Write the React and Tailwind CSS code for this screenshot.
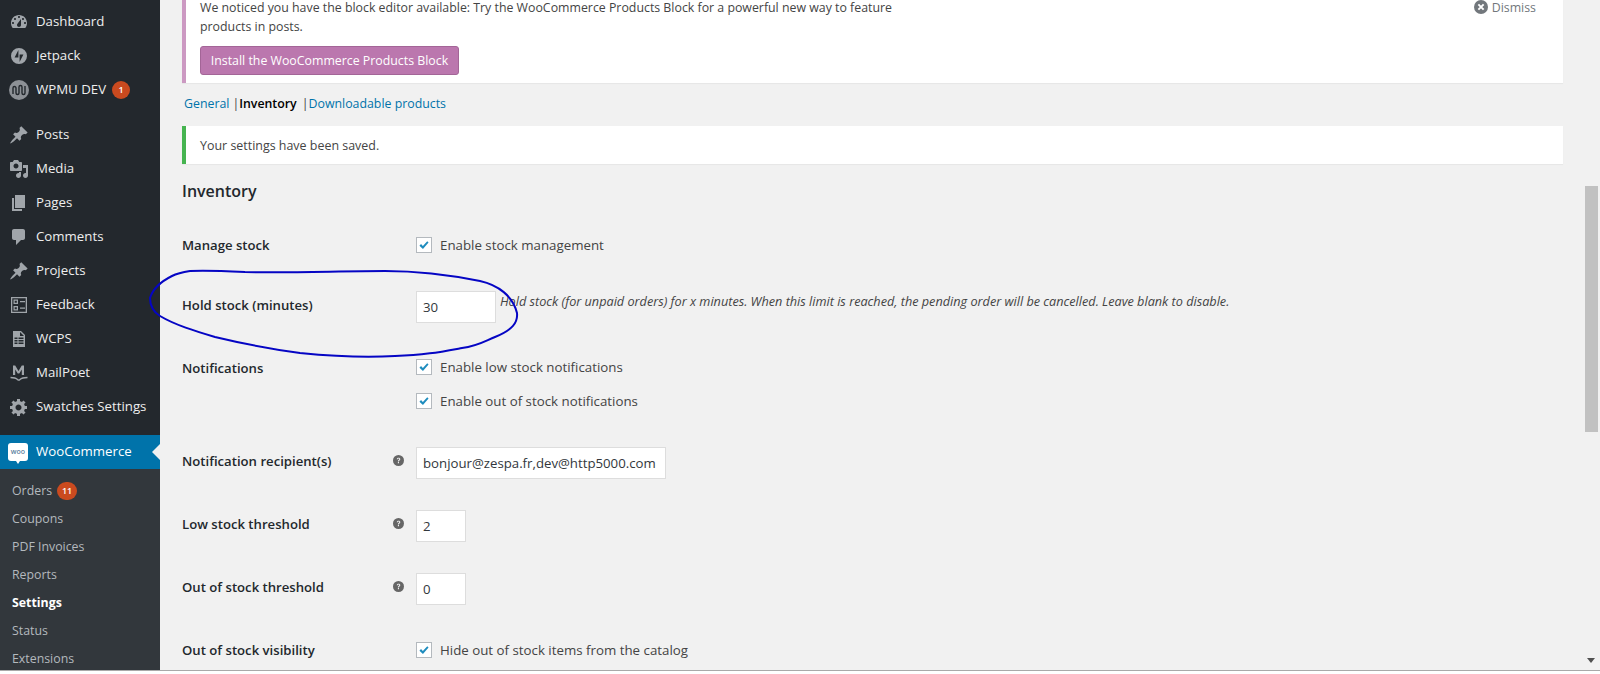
import React from "react";

const P = {
  dash: "M3.76 16h12.48c1.1-1.37 1.76-3.11 1.76-5 0-4.42-3.58-8-8-8s-8 3.58-8 8c0 1.89.66 3.63 1.76 5zM10 4c.55 0 1 .45 1 1s-.45 1-1 1-1-.45-1-1 .45-1 1-1zM6 6c.55 0 1 .45 1 1s-.45 1-1 1-1-.45-1-1 .45-1 1-1zm8 0c.55 0 1 .45 1 1s-.45 1-1 1-1-.45-1-1 .45-1 1-1zm-5.37 5.55L12 7v6c0 1.1-.9 2-2 2s-2-.9-2-2c0-.57.24-1.08.63-1.45zM4 10c.55 0 1 .45 1 1s-.45 1-1 1-1-.45-1-1 .45-1 1-1zm12 0c.55 0 1 .45 1 1s-.45 1-1 1-1-.45-1-1 .45-1 1-1z",
  jet: "M10 2a8 8 0 1 0 0 16 8 8 0 0 0 0-16zM9.4 11.4H5.6L9.4 4v7.4zm1.2 4.6V8.6h3.8L10.6 16z",
  pin: "M10.44 3.02l1.82-1.82 6.36 6.35-1.83 1.82c-1.05-.68-2.48-.57-3.41.36l-.75.75c-.92.93-1.04 2.35-.35 3.41l-1.83 1.82-2.41-2.41-2.8 2.79c-.42.42-3.38 2.71-3.8 2.29s1.86-3.39 2.28-3.81l2.79-2.79L4.1 9.36l1.83-1.82c1.05.69 2.48.57 3.4-.36l.75-.75c.93-.92 1.05-2.35.36-3.41z",
  media: "M13 11V4c0-.55-.45-1-1-1h-1.67L9 1H5L3.67 3H2c-.55 0-1 .45-1 1v7c0 .55.45 1 1 1h10c.55 0 1-.45 1-1zM7 4.5c1.38 0 2.5 1.12 2.5 2.5S8.38 9.5 7 9.5 4.5 8.38 4.5 7 5.62 4.5 7 4.5zM14 6h5v10.5c0 1.38-1.12 2.5-2.5 2.5S14 17.88 14 16.5s1.12-2.5 2.5-2.5c.17 0 .34.02.5.05V9h-3V6zm-4 8.05V13h2v3.5c0 1.38-1.12 2.5-2.5 2.5S7 17.88 7 16.5 8.12 14 9.5 14c.17 0 .34.02.5.05z",
  pages: "M6 15V2h10v13H6zm-1 1h8v2H3V5h2v11z",
  comment: "M5 2h9c1.1 0 2 .9 2 2v7c0 1.1-.9 2-2 2h-2l-5 5v-5H5c-1.1 0-2-.9-2-2V4c0-1.1.9-2 2-2z",
  feedback: "M2 2h16v16H2V2zm1.3 1.3v13.4h13.4V3.3H3.3zM4.5 4.5H9V9H4.5zm1.2 1.2v2.1h2.1V5.7H5.7zM11 6h5v1.3h-5V6zM4.5 11H9v4.5H4.5V11zm1.2 1.2v2.1h2.1v-2.1H5.7zM11 12.5h5v1.3h-5v-1.3z",
  wcps: "M4 2h8l4 4v12H4V2zm7 1v4h4l-4-4zM5.5 8.5V10h3V8.5h-3zm4 0V10h5V8.5h-5zM5.5 11v1.5h3V11h-3zm4 0v1.5h5V11h-5zM5.5 13.5V15h3v-1.5h-3zm4 0V15h5v-1.5h-5z",
  gear: "M18 12h-2.18c-.17.7-.44 1.35-.81 1.93l1.54 1.54-2.1 2.1-1.54-1.54c-.58.36-1.23.63-1.91.79V19H8v-2.18c-.68-.16-1.33-.43-1.91-.79l-1.54 1.54-2.12-2.12 1.54-1.54c-.36-.58-.63-1.23-.79-1.91H1V9.03h2.17c.16-.7.44-1.35.8-1.94L2.43 5.55l2.1-2.1 1.54 1.54c.58-.37 1.24-.64 1.93-.81V2h3v2.18c.68.16 1.33.43 1.91.79l1.54-1.54 2.12 2.12-1.54 1.54c.36.59.64 1.24.8 1.94H18V12zm-8.5 1.5c1.66 0 3-1.34 3-3s-1.34-3-3-3-3 1.34-3 3 1.34 3 3 3z",
};

function Dash({ d }) {
  return (
    <svg viewBox="0 0 20 20" className="w-5 h-5 fill-[#a0a5aa]">
      <path d={d} fillRule="evenodd" />
    </svg>
  );
}

function Wpmu() {
  return (
    <svg viewBox="0 0 20 20" className="w-5 h-5">
      <circle cx="10" cy="10" r="10" fill="#8d9196" />
      <path d="M4 14V8a1.500 1.500 0 0 1 3 0v5a1.500 1.500 0 0 0 3 0V7a1.500 1.500 0 0 1 3 0v6a1.500 1.500 0 0 0 3 0V6" fill="none" stroke="#23282d" strokeWidth="1.400" />
    </svg>
  );
}

function MailPoet() {
  return (
    <svg viewBox="0 0 20 20" className="w-5 h-5">
      <path d="M4 12V2.500h2.200L9.500 8l3.300-5.500H15V12h-2.200V6.500L10.300 10.500H8.700L6.200 6.500V12z" fill="#a0a5aa" />
      <path d="M1.500 14.500c3 0 5.500.5 7 2 .8.8 1.700.8 2.500 0 1.500-1.500 4-2 7.500-2" fill="none" stroke="#a0a5aa" strokeWidth="1.300" />
    </svg>
  );
}

function Badge({ n, wide }) {
  return (
    <span className={`inline-flex items-center justify-center h-[18px] rounded-full bg-[#ca4a1f] text-white text-[9px] font-semibold ${wide ? "w-5" : "w-[18px]"}`}>
      {n}
    </span>
  );
}

function NavRow({ icon, children }) {
  return (
    <div className="flex items-center h-[34px] pb-[1px] pl-[7px] text-[13.250px] text-[#eeeeee]">
      <span className="w-[29px] flex shrink-0 pl-[2px]">{icon}</span>
      {children}
    </div>
  );
}

function Sub({ children, bold }) {
  return (
    <div className={`flex items-center gap-[5px] h-[28px] pl-3 text-[12.350px] ${bold ? "font-bold text-white" : "text-[#b4b9be]"}`}>
      {children}
    </div>
  );
}

function Sidebar() {
  return (
    <aside className="w-[160px] shrink-0 bg-[#23282d] pt-[5px] h-full overflow-hidden">
      <NavRow icon={<Dash d={P.dash} />}>Dashboard</NavRow>
      <NavRow icon={<Dash d={P.jet} />}>Jetpack</NavRow>
      <NavRow icon={<Wpmu />}>
        <span className="mr-[6px]">WPMU DEV</span>
        <Badge n="1" />
      </NavRow>
      <div className="h-[11px]" />
      <NavRow icon={<Dash d={P.pin} />}>Posts</NavRow>
      <NavRow icon={<Dash d={P.media} />}>Media</NavRow>
      <NavRow icon={<Dash d={P.pages} />}>Pages</NavRow>
      <NavRow icon={<Dash d={P.comment} />}>Comments</NavRow>
      <NavRow icon={<Dash d={P.pin} />}>Projects</NavRow>
      <NavRow icon={<Dash d={P.feedback} />}>Feedback</NavRow>
      <NavRow icon={<Dash d={P.wcps} />}>WCPS</NavRow>
      <NavRow icon={<MailPoet />}>MailPoet</NavRow>
      <NavRow icon={<Dash d={P.gear} />}>Swatches Settings</NavRow>
      <div className="h-[11px]" />
      <div className="relative flex items-center h-[34px] pb-[1px] pl-[8px] bg-[#0073aa] text-[13.250px] text-white">
        <span className="relative w-5 h-[18px] mr-[8px] rounded-[3px] bg-white flex items-center justify-center text-[7px] font-semibold text-[#5b7fa0] leading-none">
          woo
          <span className="absolute left-[8px] -bottom-[3px] border-t-[3px] border-x-[2px] border-t-white border-x-transparent" />
        </span>
        WooCommerce
        <span className="absolute right-0 top-[9px] border-y-[8px] border-r-[8px] border-y-transparent border-r-[#f1f1f1]" />
      </div>
      <div className="bg-[#32373c] pt-[8px] h-[220px]">
        <Sub>
          Orders <Badge n="11" wide />
        </Sub>
        <Sub>Coupons</Sub>
        <Sub>PDF Invoices</Sub>
        <Sub>Reports</Sub>
        <Sub bold>Settings</Sub>
        <Sub>Status</Sub>
        <Sub>Extensions</Sub>
      </div>
    </aside>
  );
}

function Check({ children }) {
  return (
    <div className="flex items-center gap-2 h-[34px] text-[13.300px] text-[#444]">
      <span className="w-4 h-4 bg-white border border-[#b4b9be] flex items-center justify-center shrink-0">
        <svg viewBox="0 0 16 16" className="w-[15px] h-[15px]">
          <path d="M2.8 8.2l1.8-1.8 2.1 2.2 5-5.5 1.5 1.4-6.400 7.600z" fill="#1e8cbe" />
        </svg>
      </span>
      <span className="pt-px">{children}</span>
    </div>
  );
}

function Help() {
  return (
    <svg viewBox="0 0 16 16" className="w-[11px] h-[11px]">
      <circle cx="8" cy="8" r="8" fill="#666" />
      <path d="M5.5 6.2c0-1.500 1.100-2.300 2.600-2.300s2.500.8 2.500 2.100c0 1.800-2 1.700-2 3.300H7.100c0-2.300 1.900-2.300 1.900-3.300 0-.5-.4-.8-.9-.8-.6 0-1 .4-1 1H5.500zM7.100 10.300h1.600V12H7.100z" fill="#f1f1f1" />
    </svg>
  );
}

function Field({ w, value }) {
  return (
    <div className={`${w} h-[32px] bg-white border border-[#dddddd] pl-[6px] flex items-center pt-[2px] text-[13.230px] text-[#32373c]`}>
      {value}
    </div>
  );
}

function Row({ label, help, top, children, labelTop }) {
  return (
    <div className={`flex ${top}`}>
      <div className={`w-[211px] shrink-0 text-[13.150px] font-semibold text-[#23282d] leading-[18px] ${labelTop}`}>{label}</div>
      <div className="w-[23px] shrink-0 pt-[8px]">{help && <Help />}</div>
      <div className="flex items-start">{children}</div>
    </div>
  );
}

function Content() {
  return (
    <main className="flex-1 min-w-0 pl-[22px] h-full overflow-hidden">
      <div className="w-[1381px] h-[83px] bg-white border-l-4 border-[#cc99c2] shadow-[0_1px_1px_rgba(0,0,0,0.04)] pl-[14px] pr-[27px] flex justify-between text-[12.350px] text-[#444] leading-[19px]">
        <div className="w-[730px] -mt-[2px]">
          <p>We noticed you have the block editor available: Try the WooCommerce Products Block for a powerful new way to feature products in posts.</p>
          <div className="mt-[10px] w-[259px] h-[29px] bg-[#bb77ae] border border-[#a36597] rounded-[3px] text-white flex items-center justify-center">
            Install the WooCommerce Products Block
          </div>
        </div>
        <div className="flex items-start gap-[4px] text-[#72777c] -mt-[2px]">
          <svg viewBox="0 0 16 16" className="w-[14px] h-[14px] mt-[2px]">
            <circle cx="8" cy="8" r="8" fill="#72777c" />
            <path d="M5 5l6 6M11 5l-6 6" stroke="#fff" strokeWidth="2.200" />
          </svg>
          Dismiss
        </div>
      </div>

      <div className="flex items-center h-[19px] mt-[12px] pl-[2px] text-[12.350px] text-[#444]">
        <span className="text-[#0073aa]">General</span>
        <span className="ml-[3px]">|</span>
        <span className="font-semibold text-[#000]">Inventory</span>
        <span className="ml-[5px]">|</span>
        <span className="text-[#0073aa]">Downloadable products</span>
      </div>

      <div className="w-[1381px] h-[38px] mt-[12px] bg-white border-l-4 border-[#46b450] shadow-[0_1px_1px_rgba(0,0,0,0.04)] pl-[14px] pt-[2px] flex items-center text-[12.450px] font-medium text-[#444]">
        Your settings have been saved.
      </div>

      <h2 className="mt-[15px] text-[16px] leading-[24px] font-semibold text-[#23282d]">Inventory</h2>

      <Row label="Manage stock" top="mt-[25px]" labelTop="pt-[8px]">
        <Check>Enable stock management</Check>
      </Row>

      <Row label="Hold stock (minutes)" top="mt-[29px]" labelTop="pt-[5px]">
        <Field w="w-[80px]" value="30" />
        <span className="ml-1 mt-[1px] text-[12.680px] italic text-[#444] leading-[19px]">
          Hold stock (for unpaid orders) for x minutes. When this limit is reached, the pending order will be cancelled. Leave blank to disable.
        </span>
      </Row>

      <Row label="Notifications" top="mt-[29px]" labelTop="pt-[7px]">
        <div className="-mt-[2px]">
          <Check>Enable low stock notifications</Check>
          <Check>Enable out of stock notifications</Check>
        </div>
      </Row>

      <Row label="Notification recipient(s)" help top="mt-[29px]" labelTop="pt-[5px]">
        <Field w="w-[250px]" value="bonjour@zespa.fr,dev@http5000.com" />
      </Row>

      <Row label="Low stock threshold" help top="mt-[31px]" labelTop="pt-[5px]">
        <Field w="w-[50px]" value="2" />
      </Row>

      <Row label="Out of stock threshold" help top="mt-[31px]" labelTop="pt-[5px]">
        <Field w="w-[50px]" value="0" />
      </Row>

      <Row label="Out of stock visibility" top="mt-[28px]" labelTop="pt-[8px]">
        <Check>Hide out of stock items from the catalog</Check>
      </Row>
    </main>
  );
}

export default function App() {
  return (
    <div className="relative w-[1600px] h-[674px] overflow-hidden bg-white font-['Open_Sans','Noto_Sans',sans-serif]">
      <div className="flex h-[670px] bg-[#f1f1f1] border-b border-[#a9a9a9] box-content">
        <Sidebar />
        <Content />
      </div>

      {/* Scrollbar */}
      <div className="absolute left-[1585px] top-[186px] w-[13px] h-[246px] bg-[#c1c1c1]" />
      <svg viewBox="0 0 8 5" className="absolute left-[1587px] top-[658px] w-2 h-[5px] fill-[#505050]">
        <path d="M0 0h8L4 5z" />
      </svg>

      {/* Hand-drawn annotation */}
      <svg viewBox="0 0 1600 674" className="absolute inset-0 w-[1600px] h-[674px] pointer-events-none" fill="none">
        <path
          d="M190 271C205 270 225 271 245 272C290 273 340 271 385 271C420 271 450 275 480 281C498 285 513 296 517 313C518 323 512 330 495 337C485 341 478 346 462 348C440 352 425 355 395 356C365 358 330 356 300 353C270 349 240 343 215 337C195 331 175 325 160 316C152 311 150 305 150 298C153 288 162 281 172 276C178 273 184 272 190 271Z"
          stroke="#0505c4"
          strokeWidth="2"
        />
      </svg>
    </div>
  );
}
